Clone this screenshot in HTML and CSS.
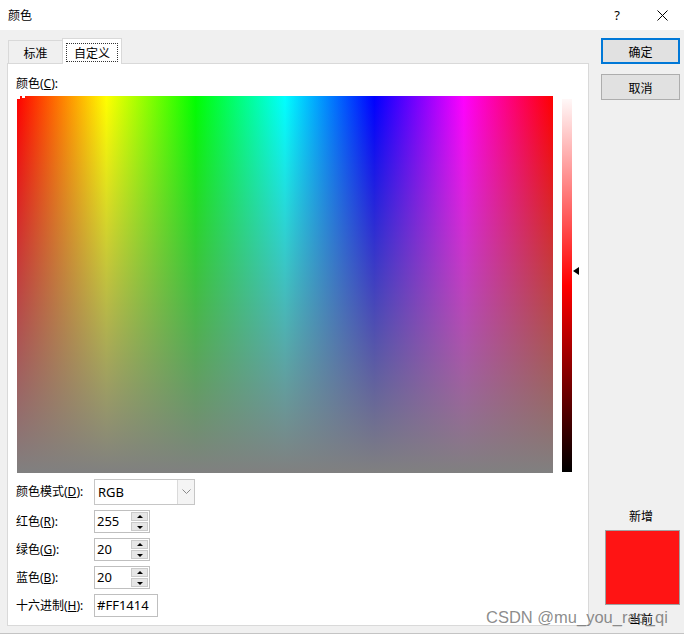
FILE: index.html
```html
<!DOCTYPE html>
<html lang="zh-CN">
<head>
<meta charset="utf-8">
<title>颜色</title>
<link rel="stylesheet" href="styles.css">
</head>
<body>
<div class="dialog">
  <div class="titlebar">
    <span class="title">颜色</span>
    <div class="title-btns">
      <span class="tbtn help">?</span>
      <span class="tbtn close"><svg width="11" height="11" viewBox="0 0 11 11"><path d="M0.5 0.5L10.5 10.5M10.5 0.5L0.5 10.5" stroke="#000" stroke-width="1" fill="none"/></svg></span>
    </div>
  </div>
  <div class="body">
    <div class="left">
      <div class="tabs">
        <div class="tab">标准</div>
        <div class="tab active"><span class="focus">自定义</span></div>
      </div>
      <div class="panel">
        <div class="top-lbl">颜色(<u>C</u>):</div>
        <div class="picker">
          <div class="spectrum"><span class="cross-a"></span><span class="cross-b"></span></div>
          <div class="lum"></div>
          <span class="arrow"></span>
        </div>
        <div class="form">
          <div class="row row-mode">
            <label class="lbl">颜色模式(<u>D</u>):</label>
            <div class="select"><span class="sel-val">RGB</span><span class="dd"><svg width="9" height="6" viewBox="0 0 9 6"><path d="M0.5 0.5L4.5 4.5L8.5 0.5" stroke="#8a8a8a" stroke-width="1" fill="none"/></svg></span></div>
          </div>
          <div class="row">
            <label class="lbl">红色(<u>R</u>):</label>
            <div class="spin"><span class="val">255</span><span class="arrows"><span class="sb up"></span><span class="sb down"></span></span></div>
          </div>
          <div class="row">
            <label class="lbl">绿色(<u>G</u>):</label>
            <div class="spin"><span class="val">20</span><span class="arrows"><span class="sb up"></span><span class="sb down"></span></span></div>
          </div>
          <div class="row">
            <label class="lbl">蓝色(<u>B</u>):</label>
            <div class="spin"><span class="val">20</span><span class="arrows"><span class="sb up"></span><span class="sb down"></span></span></div>
          </div>
          <div class="row">
            <label class="lbl">十六进制(<u>H</u>):</label>
            <div class="hex"><span class="val">#FF1414</span></div>
          </div>
        </div>
      </div>
    </div>
    <div class="right">
      <div class="btn default">确定</div>
      <div class="btn">取消</div>
      <div class="swatch-block">
        <div class="swlabel">新增</div>
        <div class="swatch"></div>
        <div class="swlabel">当前</div>
      </div>
    </div>
  </div>
  <div class="watermark">CSDN @mu_you_rao_qi</div>
</div>
</body>
</html>
```

FILE: styles.css
```css
* { box-sizing: border-box; margin: 0; padding: 0; }
html, body { width: 684px; height: 637px; overflow: hidden; background: #fff; }
body { font-family: "Noto Sans", "Noto Sans CJK SC", sans-serif; font-size: 12px; color: #000; }
.dialog { position: relative; width: 684px; height: 637px; display: flex; flex-direction: column; }

.titlebar { height: 30px; display: flex; align-items: center; justify-content: space-between; padding-left: 8px; background: #fff; }
.title { font-family: "Noto Sans CJK SC", sans-serif; font-size: 12px; line-height: 16px; }
.title-btns { display: flex; height: 30px; }
.tbtn { height: 30px; display: flex; align-items: center; justify-content: center; }
.help { width: 46px; font-size: 13px; }
.close { width: 44px; }

.body { height: 604px; display: flex; background: #f0f0f0; border-bottom: 1px solid #c4c4c4; }
.left { width: 590px; padding: 8px 0 0 7px; }
.tabs { display: flex; align-items: flex-start; height: 25px; padding-left: 1px; }
.tab { width: 54px; height: 23px; margin-top: 2px; border-top: 1px solid #d9d9d9; border-left: 1px solid #d9d9d9; display: flex; align-items: center; justify-content: center; font-family: "Noto Sans CJK SC", sans-serif; font-size: 12px; }
.tab.active { width: 60px; height: 26px; margin-top: 0; background: #fff; border: 1px solid #d9d9d9; border-bottom: none; position: relative; z-index: 1; padding-top: 1px; }
.focus { border: 1px dotted #333; padding: 0 7px; line-height: 17px; }

.panel { width: 582px; height: 563px; background: #fff; border: 1px solid #d9d9d9; padding: 11px 0 0 8px; }
.top-lbl { line-height: 17px; height: 17px; margin-bottom: 4px; }
.picker { position: relative; display: flex; align-items: flex-start; height: 377px; }
.spectrum { position: relative; margin-left: 1px; width: 536px; height: 377px;
  background:
    linear-gradient(to bottom, rgba(128,128,128,0), rgb(128,128,128)),
    linear-gradient(to right, #ff0000 0%, #ffff00 16.67%, #00ff00 33.33%, #00ffff 50%, #0000ff 66.67%, #ff00ff 83.33%, #ff0000 100%); }
.cross-a { position: absolute; left: 0; top: 0; width: 3px; height: 3px; background: #fff; }
.cross-b { position: absolute; left: 5px; top: 0; width: 3px; height: 2px; background: #fff; }
.lum { margin-left: 9px; margin-top: 3px; width: 10px; height: 373px;
  background: linear-gradient(to bottom, #fff8f8 0%, #ff0000 50%, #000 100%); }
.arrow { position: absolute; left: 557px; top: 171px; width: 0; height: 0; border-top: 4px solid transparent; border-bottom: 4px solid transparent; border-right: 6px solid #000; }

.form { margin-top: 6px; display: flex; flex-direction: column; gap: 5px; }
.row { display: flex; align-items: center; height: 23px; }
.row-mode { height: 26px; }
.lbl { width: 78px; font-size: 12px; line-height: 16px; }
.select { width: 101px; height: 26px; border: 1px solid #c6c6c6; display: flex; background: #fff; }
.sel-val { flex: 1; padding-left: 3px; font-size: 13px; line-height: 24px; }
.dd { width: 17px; border-left: 1px solid #dadada; background: #f4f4f4; display: flex; align-items: center; justify-content: center; }
.spin { width: 56px; height: 23px; border: 1px solid #bfbfbf; display: flex; background: #fff; }
.val { flex: 1; padding-left: 2px; font-size: 13px; line-height: 21px; }
.arrows { width: 18px; display: flex; flex-direction: column; padding: 1px 1px 1px 0; gap: 1px; }
.sb { flex: 1; background: #e6e6e6; border: 1px solid #cacaca; position: relative; }
.sb::after { content: ""; position: absolute; left: 50%; top: 50%; margin-left: -3px; width: 0; height: 0; border-left: 3px solid transparent; border-right: 3px solid transparent; }
.up::after { margin-top: -2px; border-bottom: 3px solid #000; }
.down::after { margin-top: -1px; border-top: 3px solid #000; }
.hex { width: 64px; height: 23px; border: 1px solid #bfbfbf; display: flex; background: #fff; }

.right { width: 94px; display: flex; flex-direction: column; padding: 8px 0 6px 11px; }
.btn { width: 79px; height: 26px; background: #e1e1e1; border: 1px solid #adadad; display: flex; align-items: center; justify-content: center; font-family: "Noto Sans CJK SC", sans-serif; font-size: 12px; margin-bottom: 10px; }
.btn.default { border-color: #0078d7; box-shadow: inset 0 0 0 1px #0078d7; }
.swatch-block { margin-top: auto; display: flex; flex-direction: column; align-items: center; width: 80px; margin-left: 0; }
.swlabel { font-family: "Noto Sans CJK SC", sans-serif; font-size: 12px; line-height: 16px; height: 16px; }
.swatch { width: 75px; height: 75px; background: #ff1414; border: 1px solid #a0a0a0; margin: 6px 0 6px 3px; }

.watermark { position: absolute; left: 486px; top: 607px; font-family: "Liberation Sans", sans-serif; font-size: 16.5px; line-height: 20px; color: rgba(110,110,110,0.8); white-space: nowrap; }
```
